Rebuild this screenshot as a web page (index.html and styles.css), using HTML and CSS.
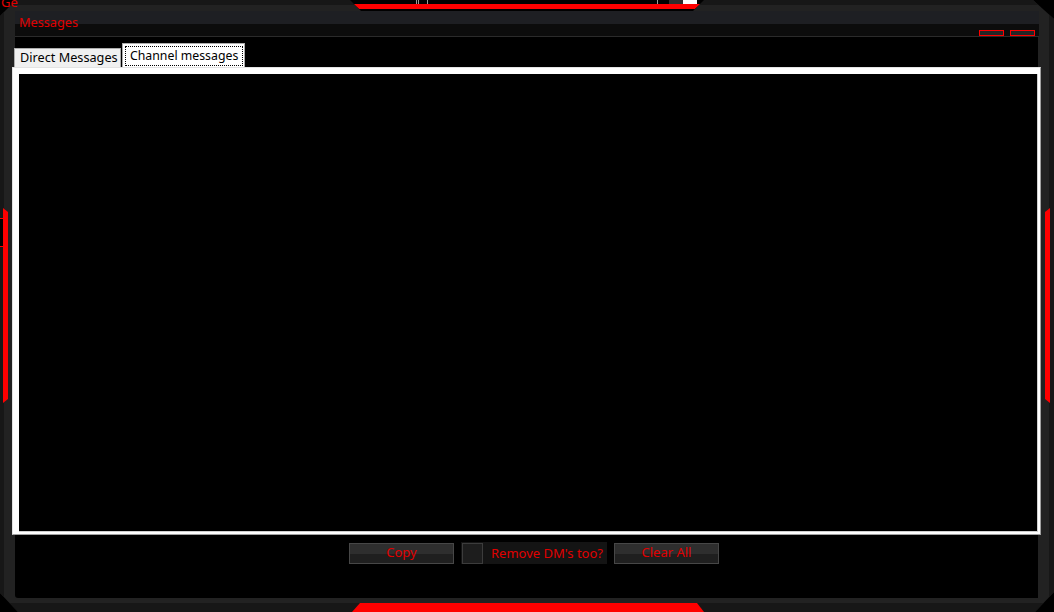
FILE: index.html
```html
<!DOCTYPE html>
<html>
<head>
<meta charset="utf-8">
<link rel="stylesheet" href="styles.css">
</head>
<body>
<div class="window">
  <div class="titlebar">
    <div class="title">Messages</div>
    <div class="win-btns">
      <span class="win-btn"></span>
      <span class="win-btn"></span>
    </div>
  </div>
  <div class="main">
    <div class="tabs">
      <div class="tab">Direct Messages</div>
      <div class="tab active"><span class="focus">Channel messages</span></div>
    </div>
    <div class="panel">
      <div class="textbox"></div>
    </div>
    <div class="actions">
      <button class="btn">Copy</button>
      <label class="check">
        <span class="box"></span>
        <span class="check-label">Remove DM's too?</span>
      </label>
      <button class="btn">Clear All</button>
    </div>
  </div>
</div>
<div class="behind-text">Ge</div>
<div class="top-notch">
  <span class="notch-line l1"></span>
  <span class="notch-line l2"></span>
  <span class="notch-line l3"></span>
  <span class="notch-line l4"></span>
  <span class="notch-dark"></span>
  <span class="notch-white"></span>
  <span class="notch-red"></span>
</div>
<div class="side-bar left"></div>
<div class="side-bar right"></div>
<div class="side-tab"></div>
<div class="bottom-red"></div>
</body>
</html>
```
FILE: styles.css
```css
html, body {
  margin: 0;
  padding: 0;
  background: #000;
  width: 1054px;
  height: 612px;
  overflow: hidden;
  font-family: "Noto Sans", "Open Sans", sans-serif;
}

.window {
  box-sizing: border-box;
  width: 1054px;
  height: 612px;
  background: #222222;
  border-style: solid;
  border-color: #171717;
  border-width: 5px 5px 9px 4px;
  padding: 6px 11px 5px 11px;
  display: flex;
  flex-direction: column;
  clip-path: polygon(16px 0, calc(100% - 21px) 0, 100% 19px, 100% calc(100% - 20px), calc(100% - 19px) 100%, 18px 100%, 0 calc(100% - 19px), 0 16px);
}

.titlebar {
  height: 26px;
  flex: none;
  display: flex;
  background: linear-gradient(#1e1f23 0, #1e1f23 13px, #0c0c0c 13px, #0c0c0c 25px, #2b2b2b 25px);
  margin-right: -1px;
}

.title {
  flex: 1;
  color: #e00000;
  font-size: 12.7px;
  line-height: 13px;
  padding: 5px 0 0 4px;
}

.win-btns {
  align-self: flex-end;
  display: flex;
  gap: 6px;
  margin: 0 4px 1px 0;
}

.win-btn {
  box-sizing: border-box;
  width: 25px;
  height: 6px;
  border: 1px solid #ff0000;
  background: #262626;
}

.main {
  flex: 1;
  background: #000;
  display: flex;
  flex-direction: column;
  padding-top: 6px;
  border-bottom-left-radius: 3px;
}

.tabs {
  height: 24px;
  display: flex;
  align-items: flex-end;
  margin: 0 -3px;
  padding-left: 2px;
}

.tab {
  box-sizing: border-box;
  height: 19px;
  width: 107px;
  background: #f0f0f0;
  border: 1px solid #adadad;
  border-bottom: none;
  font-size: 12.7px;
  line-height: 17px;
  color: #000;
  padding-left: 5px;
  white-space: nowrap;
}

.tab.active {
  height: 24px;
  width: 123px;
  background: #fff;
  padding: 2px 0 0 2px;
  margin-left: 1px;
}

.focus {
  display: block;
  box-sizing: border-box;
  width: 118px;
  height: 20px;
  border: 1px dotted #000;
  font-size: 12.3px;
  line-height: 17px;
  padding-left: 4px;
}

.panel {
  box-sizing: border-box;
  height: 468px;
  flex: none;
  margin: 0 -3px;
  background: #fff;
  border: 1px solid #e3e3e3;
  border-right-color: #a0a0a0;
  border-bottom-color: #a0a0a0;
  padding: 6px 2px 2px 6px;
}

.textbox {
  height: 100%;
  background: #000;
  border-right: 1px solid #cfcfcf;
  border-bottom: 1px solid #cfcfcf;
  box-sizing: border-box;
}

.actions {
  flex: 1;
  display: flex;
  align-items: flex-start;
  gap: 7px;
  padding: 8px 0 0 334px;
}

.btn {
  box-sizing: border-box;
  width: 105px;
  height: 21px;
  border: 1px solid #474747;
  background: linear-gradient(#2e2e2e 0, #2e2e2e 50%, #1f1f1f 50%, #1f1f1f 100%);
  color: #e00000;
  font-family: "Noto Sans", "Open Sans", sans-serif;
  font-size: 13px;
  line-height: 17px;
  padding: 0 0 2px;
  text-align: center;
}

.check {
  box-sizing: border-box;
  width: 146px;
  height: 22px;
  margin-top: -1px;
  background: #141414;
  display: flex;
  align-items: center;
  padding-left: 1px;
}

.box {
  box-sizing: border-box;
  width: 21px;
  height: 21px;
  margin-top: 1px;
  border: 1px solid #3c3c3c;
  background: #1d1d1d;
  flex: none;
}

.check-label {
  color: #e00000;
  font-size: 13px;
  line-height: 17px;
  padding-left: 8px;
  white-space: nowrap;
}

.behind-text {
  position: absolute;
  left: 1px;
  top: -6px;
  color: #e00000;
  font-size: 13px;
  line-height: 16px;
}

.top-notch {
  position: absolute;
  left: 350px;
  top: 0;
  width: 354px;
  height: 11px;
  background: #000;
  clip-path: polygon(0 0, 100% 0, calc(100% - 11px) 100%, 11px 100%);
}

.notch-line {
  position: absolute;
  top: 0;
  width: 1px;
  height: 4px;
  background: #9a9a9a;
}
.notch-line.l1 { left: 66px; }
.notch-line.l2 { left: 68px; }
.notch-line.l3 { left: 77px; }
.notch-line.l4 { left: 307px; }

.notch-dark {
  position: absolute;
  top: 0;
  left: 319px;
  width: 14px;
  height: 4px;
  background: #2e2e2e;
}

.notch-white {
  position: absolute;
  top: 0;
  left: 333px;
  width: 14px;
  height: 4px;
  background: #fff;
}

.notch-red {
  position: absolute;
  top: 4px;
  left: 3px;
  width: 348px;
  height: 5px;
  background: #ff0000;
  clip-path: polygon(0 0, 100% 0, calc(100% - 6px) 100%, 6px 100%);
}

.side-bar {
  position: absolute;
  top: 208px;
  width: 5px;
  height: 195px;
  background: #ff0000;
}
.side-bar.left {
  left: 3px;
  clip-path: polygon(0 0, 100% 4px, 100% calc(100% - 4px), 0 100%);
}
.side-bar.right {
  left: 1045px;
  clip-path: polygon(0 4px, 100% 0, 100% 100%, 0 calc(100% - 4px));
}

.side-tab {
  position: absolute;
  left: 0;
  top: 218px;
  width: 3px;
  height: 27px;
  background: #000;
  border: 1px solid #ff0000;
  border-left: none;
}

.bottom-red {
  position: absolute;
  left: 352px;
  top: 603px;
  width: 352px;
  height: 9px;
  background: #ff0000;
  clip-path: polygon(8px 0, calc(100% - 7px) 0, 100% 100%, 0 100%);
}
```
